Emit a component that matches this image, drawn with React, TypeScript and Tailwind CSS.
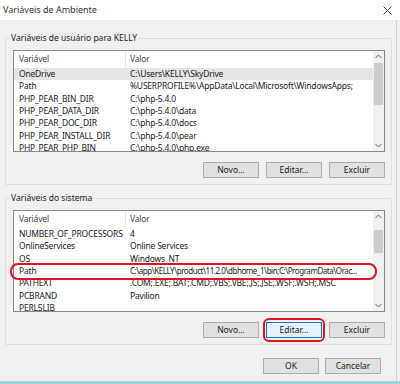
import { ReactNode } from "react";

type Row = { name: string; value: string; selected?: boolean; tight?: boolean };

const userVars: Row[] = [
  { name: "OneDrive", value: "C:\\Users\\KELLY\\SkyDrive", selected: true },
  { name: "Path", value: "%USERPROFILE%\\AppData\\Local\\Microsoft\\WindowsApps;" },
  { name: "PHP_PEAR_BIN_DIR", value: "C:\\php-5.4.0" },
  { name: "PHP_PEAR_DATA_DIR", value: "C:\\php-5.4.0\\data" },
  { name: "PHP_PEAR_DOC_DIR", value: "C:\\php-5.4.0\\docs" },
  { name: "PHP_PEAR_INSTALL_DIR", value: "C:\\php-5.4.0\\pear" },
  { name: "PHP_PEAR_PHP_BIN", value: "C:\\php-5.4.0\\php.exe" },
];

const systemVars: Row[] = [
  { name: "NUMBER_OF_PROCESSORS", value: "4" },
  { name: "OnlineServices", value: "Online Services" },
  { name: "OS", value: "Windows_NT" },
  {
    name: "Path",
    value: "C:\\app\\KELLY\\product\\11.2.0\\dbhome_1\\bin;C:\\ProgramData\\Orac...",
    tight: true,
  },
  { name: "PATHEXT", value: ".COM;.EXE;.BAT;.CMD;.VBS;.VBE;.JS;.JSE;.WSF;.WSH;.MSC" },
  { name: "PCBRAND", value: "Pavilion" },
  { name: "PERL5LIB", value: "" },
];

const Scrollbar = ({ thumbTop, thumbHeight }: { thumbTop: string; thumbHeight: string }) => (
  <div className="relative w-[11px] shrink-0 bg-[#f0f0f0]">
    <div className="h-[11px] flex items-center justify-center">
      <svg width="7" height="5" viewBox="0 0 7 5">
        <path d="M0.5 4 L3.5 1 L6.5 4" fill="none" stroke="#606060" strokeWidth="1" />
      </svg>
    </div>
    <div className={`absolute left-[1px] right-[1px] bg-[#cdcdcd] ${thumbTop} ${thumbHeight}`} />
    <div className="absolute bottom-0 left-0 right-0 h-[11px] flex items-center justify-center">
      <svg width="7" height="5" viewBox="0 0 7 5">
        <path d="M0.5 1 L3.5 4 L6.5 1" fill="none" stroke="#606060" strokeWidth="1" />
      </svg>
    </div>
  </div>
);

const VarList = ({
  rows,
  thumbTop,
  thumbHeight,
  markPath,
}: {
  rows: Row[];
  thumbTop: string;
  thumbHeight: string;
  markPath?: boolean;
}) => (
  <div className="relative ml-[7px] mr-[6px] h-[102px] border border-[#828790] bg-white flex">
    <div className="flex-1 min-w-0 w-0 flex flex-col overflow-hidden text-[8.5px] tracking-[-0.2px]">
      {/* header */}
      <div className="h-[16px] shrink-0 flex items-center text-[#444]">
        <div className="w-[112px] h-full pl-[5px] flex items-center border-r border-[#e5e5e5]">Variável</div>
        <div className="pl-[4px]">Valor</div>
      </div>
      <div className="h-[1px] shrink-0" />
      {rows.map((r) => (
        <div
          key={r.name}
          className={`h-[12.4px] shrink-0 flex items-center whitespace-nowrap ${r.selected ? "bg-[#e5e5e5]" : ""}`}
        >
          <div className="w-[112px] pl-[5px] shrink-0 overflow-hidden">{r.name}</div>
          <div className={`pl-[4px] ${r.tight ? "text-[8px] tracking-[-0.45px]" : ""}`}>{r.value}</div>
        </div>
      ))}
    </div>
    <Scrollbar thumbTop={thumbTop} thumbHeight={thumbHeight} />
    {markPath && (
      <span className="absolute left-[-4px] right-[7px] top-[52px] h-[17px] border-[2px] border-[#e0141e] rounded-[8px]" />
    )}
  </div>
);

const Btn = ({ children, hot }: { children: ReactNode; hot?: boolean }) => (
  <div className="relative">
    <button
      className={`w-[56px] h-[16px] flex items-center justify-center border text-[8.5px] ${
        hot ? "bg-[#e5f1fb] border-[#0078d7]" : "bg-[#e1e1e1] border-[#adadad]"
      }`}
    >
      {children}
    </button>
    {hot && (
      <span className="absolute left-[-3px] right-[-3px] top-[-4px] bottom-[-4px] border-[2px] border-[#e0141e] rounded-[6px]" />
    )}
  </div>
);

const Group = ({
  title,
  rows,
  thumbTop,
  thumbHeight,
  system,
}: {
  title: string;
  rows: Row[];
  thumbTop: string;
  thumbHeight: string;
  system?: boolean;
}) => (
  <fieldset className="min-w-0 ml-[5px] mr-[4px] border border-[#dcdcdc] rounded-[2px] pb-[6px]">
    <legend className="ml-[4px] px-[1px] text-[#222] leading-[12px] text-[8.5px]">{title}</legend>
    <div className="h-[6px]" />
    <VarList rows={rows} thumbTop={thumbTop} thumbHeight={thumbHeight} markPath={system} />
    <div className="flex justify-end gap-[7px] mr-[6px] mt-[10px]">
      <Btn>Novo...</Btn>
      <Btn hot={system}>Editar...</Btn>
      <Btn>Excluir</Btn>
    </div>
  </fieldset>
);

export default function App() {
  return (
    <div
      className="w-[400px] h-[384px] flex flex-col bg-[#f0f0f0] text-[9px] text-[#1a1a1a] overflow-hidden"
      style={{ fontFamily: '"Noto Sans", "Open Sans", sans-serif' }}
    >
      {/* title bar */}
      <div className="h-[20px] shrink-0 bg-white flex items-center justify-between pl-[3px] pr-[8px] text-[#333]">
        <span>Variáveis de Ambiente</span>
        <svg width="9" height="9" viewBox="0 0 9 9">
          <path d="M0.5 0.5 L8.5 8.5 M8.5 0.5 L0.5 8.5" stroke="#444" strokeWidth="1" />
        </svg>
      </div>

      <div className="flex-1 flex flex-col pt-[12px] border-r border-[#d0d0d0] mr-[3px]">
        <Group
          title="Variáveis de usuário para KELLY"
          rows={userVars}
          thumbTop="top-[12px]"
          thumbHeight="h-[42px]"
        />
        <div className="h-[7px]" />
        <Group title="Variáveis do sistema" rows={systemVars} thumbTop="top-[19px]" thumbHeight="h-[23px]" system />
        <div className="flex justify-end gap-[6px] mr-[15px] mt-[13px]">
          <Btn>OK</Btn>
          <Btn>Cancelar</Btn>
        </div>
      </div>
      <div className="h-[3px] shrink-0 bg-[#9fd3d6]" />
    </div>
  );
}
